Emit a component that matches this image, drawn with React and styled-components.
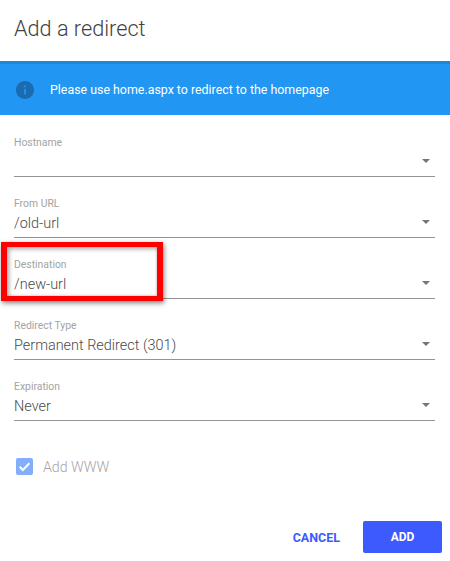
import styled, { createGlobalStyle } from "styled-components";

const GlobalStyle = createGlobalStyle`
  html, body {
    margin: 0;
    padding: 0;
    background: #fff;
  }
  body {
    font-family: Roboto, "Liberation Sans", sans-serif;
  }
`;

const Dialog = styled.div`
  position: relative;
  width: 450px;
  height: 561px;
  display: flex;
  flex-direction: column;
  background: #fff;
  overflow: hidden;
`;

const Title = styled.h2`
  margin: 0;
  height: 61px;
  padding: 13px 14px 0;
  box-sizing: border-box;
  font-size: 21.7px;
  line-height: 32px;
  font-weight: 300;
  color: #424242;
`;

const Banner = styled.div`
  height: 54px;
  box-sizing: border-box;
  display: flex;
  align-items: center;
  gap: 16px;
  padding: 0 16px;
  background: #2196f3;
  border-top: 3px solid #1e88d8;
  color: #fff;
  font-size: 12.4px;
`;

const InfoIcon = styled.svg`
  width: 18px;
  height: 18px;
  fill: #1a6bb0;
  flex: none;
`;

const Form = styled.div`
  display: flex;
  flex-direction: column;
  gap: 20px;
  padding: 21px 15px 0 14px;
`;

const Field = styled.div`
  height: 41px;
  box-sizing: border-box;
  position: relative;
  display: flex;
  flex-direction: column;
  padding-top: 1px;
  border-bottom: 1px solid #949494;
`;

const Label = styled.label`
  font-size: 10.4px;
  line-height: 12px;
  color: #a3a3a3;
  font-weight: 400;
`;

const Value = styled.div`
  font-size: 14.45px;
  line-height: 20px;
  margin-top: 4px;
  color: #4a4a4a;
  font-weight: 300;
`;

const Caret = styled.span`
  position: absolute;
  right: 5.5px;
  top: 23px;
  width: 0;
  height: 0;
  border-left: 4.5px solid transparent;
  border-right: 4.5px solid transparent;
  border-top: 4.5px solid #757575;
`;

const CheckRow = styled.div`
  display: flex;
  align-items: center;
  gap: 10px;
  margin: 37px 0 0 16px;
`;

const Box = styled.span`
  width: 17px;
  height: 17px;
  border-radius: 2px;
  background: #82aefc;
  display: flex;
  align-items: center;
  justify-content: center;
`;

const CheckLabel = styled.span`
  font-size: 14.2px;
  color: #a6a6a6;
  font-weight: 300;
`;

const Actions = styled.div`
  margin-top: auto;
  display: flex;
  align-items: center;
  justify-content: flex-end;
  gap: 23px;
  padding: 0 8px 8px 0;
`;

const Button = styled.button`
  height: 32px;
  width: ${({ $primary }) => ($primary ? "79px" : "auto")};
  padding: 0;
  border: 0;
  border-radius: 2px;
  font-family: inherit;
  font-size: ${({ $primary }) => ($primary ? "12px" : "12.5px")};
  font-weight: 700;
  background: ${({ $primary }) => ($primary ? "#3d5afe" : "transparent")};
  color: ${({ $primary }) => ($primary ? "#fff" : "#3d5afe")};
`;

const Highlight = styled.div`
  position: absolute;
  left: 1px;
  top: 242px;
  width: 162px;
  height: 59px;
  box-sizing: border-box;
  border: solid #ff0000;
  border-width: 5px 6px;
  box-shadow: 1px 2px 5px rgba(0, 0, 0, 0.5), inset 2px 2px 4px rgba(0, 0, 0, 0.35), inset -1px -1px 2px rgba(0, 0, 0, 0.12);
`;

const fields = [
  { label: "Hostname", value: "" },
  { label: "From URL", value: "/old-url" },
  { label: "Destination", value: "/new-url" },
  { label: "Redirect Type", value: "Permanent Redirect (301)" },
  { label: "Expiration", value: "Never" },
];

export default function App() {
  return (
    <Dialog>
      <GlobalStyle />
      <Title>Add a redirect</Title>
      <Banner>
        <InfoIcon viewBox="2 2 20 20">
          <path d="M12 2C6.48 2 2 6.48 2 12s4.48 10 10 10 10-4.48 10-10S17.52 2 12 2zm1 15h-2v-6h2v6zm0-8h-2V7h2v2z" />
        </InfoIcon>
        Please use home.aspx to redirect to the homepage
      </Banner>
      <Form>
        {fields.map((f) => (
          <Field key={f.label}>
            <Label>{f.label}</Label>
            <Value>{f.value}</Value>
            <Caret />
          </Field>
        ))}
      </Form>
      <CheckRow>
        <Box>
          <svg width="13" height="13" viewBox="0 0 24 24" fill="none" stroke="#fff" strokeWidth="3.5">
            <path d="M3 12.5l6 6L21 6" />
          </svg>
        </Box>
        <CheckLabel>Add WWW</CheckLabel>
      </CheckRow>
      <Actions>
        <Button>CANCEL</Button>
        <Button $primary>ADD</Button>
      </Actions>
      <Highlight />
    </Dialog>
  );
}
